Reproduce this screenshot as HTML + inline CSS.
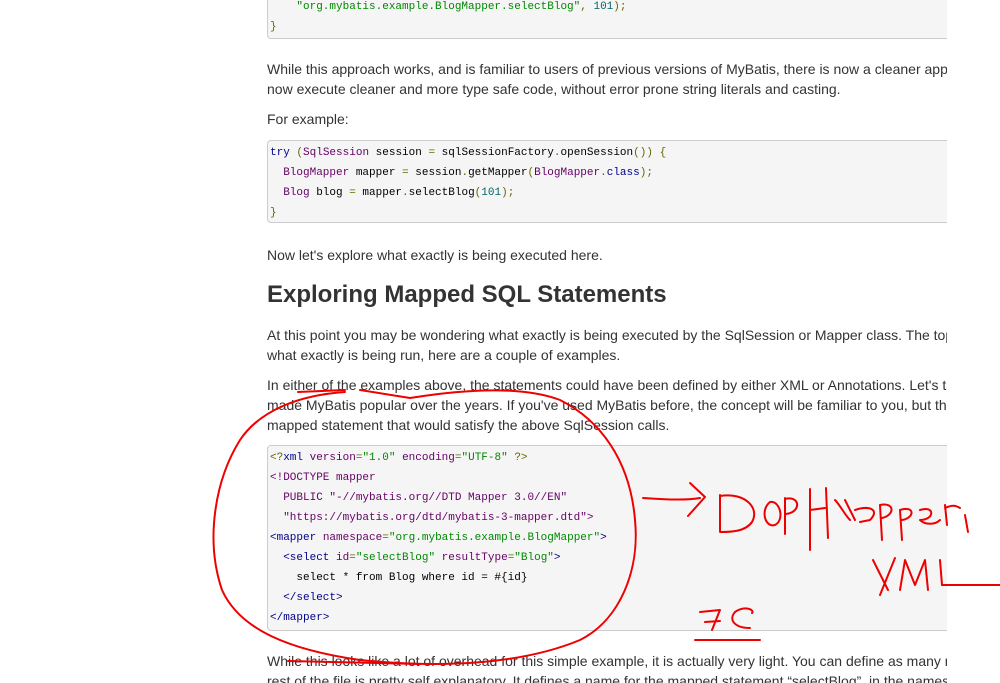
<!DOCTYPE html>
<html><head><meta charset="utf-8"><style>
body{margin:0;width:1000px;height:683px;background:#fff;overflow:hidden;position:relative;font-family:"Liberation Sans",Arial,sans-serif;color:#333}
#col{position:absolute;left:267px;top:0;width:680px;height:683px;overflow:hidden}
.p{position:absolute;left:0;white-space:nowrap;font-size:14px;line-height:20px}
.code{position:absolute;left:0;width:700px;background:#f5f5f5;border:1px solid #ccc;border-radius:4px;box-sizing:border-box;font-family:"Liberation Mono",monospace;font-size:11px;line-height:20px;padding:0 0 0 2px;white-space:pre;color:#000}
h2{position:absolute;left:0;margin:0;font-size:24px;line-height:30px;font-weight:bold;white-space:nowrap;color:#333}
.k{color:#008}.s{color:#080}.t{color:#606}.n{color:#066}.pu{color:#660}
</style></head><body>
<div id="col">
<div class="code" style="top:-6px;height:45px;padding-top:2px"><span class="s">    "org.mybatis.example.BlogMapper.selectBlog"</span><span class="pu">,</span> <span class="n">101</span><span class="pu">);</span>
<span class="pu">}</span></div>
<div class="p" style="top:59px">While this approach works, and is familiar to users of previous versions of MyBatis, there is now a cleaner approach. Using an interface</div>
<div class="p" style="top:79px">now execute cleaner and more type safe code, without error prone string literals and casting.</div>
<div class="p" style="top:109px">For example:</div>
<div class="code" style="top:140px;height:83px;padding-top:2px"><span class="k">try</span> <span class="pu">(</span><span class="t">SqlSession</span> session <span class="pu">=</span> sqlSessionFactory<span class="pu">.</span>openSession<span class="pu">())</span> <span class="pu">{</span>
  <span class="t">BlogMapper</span> mapper <span class="pu">=</span> session<span class="pu">.</span>getMapper<span class="pu">(</span><span class="t">BlogMapper</span><span class="pu">.</span><span class="k">class</span><span class="pu">);</span>
  <span class="t">Blog</span> blog <span class="pu">=</span> mapper<span class="pu">.</span>selectBlog<span class="pu">(</span><span class="n">101</span><span class="pu">);</span>
<span class="pu">}</span></div>
<div class="p" style="top:245px">Now let's explore what exactly is being executed here.</div>
<h2 style="top:280px">Exploring Mapped SQL Statements</h2>
<div class="p" style="top:325px">At this point you may be wondering what exactly is being executed by the SqlSession or Mapper class. The topic of Mapped SQL Statements</div>
<div class="p" style="top:345px">what exactly is being run, here are a couple of examples.</div>
<div class="p" style="top:375px">In either of the examples above, the statements could have been defined by either XML or Annotations. Let's take a look at XML first.</div>
<div class="p" style="top:395px">made MyBatis popular over the years. If you've used MyBatis before, the concept will be familiar to you, but there have been numerous</div>
<div class="p" style="top:415px">mapped statement that would satisfy the above SqlSession calls.</div>
<div class="code" style="top:445px;height:186px;padding-top:2px"><span class="pu">&lt;?</span><span class="k">xml</span> <span class="t">version</span><span class="pu">=</span><span class="s">"1.0"</span> <span class="t">encoding</span><span class="pu">=</span><span class="s">"UTF-8"</span> <span class="pu">?&gt;</span>
<span class="t">&lt;!DOCTYPE mapper</span>
<span class="t">  PUBLIC "-//mybatis.org//DTD Mapper 3.0//EN"</span>
<span class="t">  "https://mybatis.org/dtd/mybatis-3-mapper.dtd"&gt;</span>
<span class="k">&lt;mapper</span> <span class="t">namespace</span><span class="pu">=</span><span class="s">"org.mybatis.example.BlogMapper"</span><span class="k">&gt;</span>
  <span class="k">&lt;select</span> <span class="t">id</span><span class="pu">=</span><span class="s">"selectBlog"</span> <span class="t">resultType</span><span class="pu">=</span><span class="s">"Blog"</span><span class="k">&gt;</span>
    select * from Blog where id = #{id}
  <span class="k">&lt;/select&gt;</span>
<span class="k">&lt;/mapper&gt;</span></div>
<div class="p" style="top:651px">While this looks like a lot of overhead for this simple example, it is actually very light. You can define as many mapped statements as</div>
<div class="p" style="top:671px">rest of the file is pretty self explanatory. It defines a name for the mapped statement “selectBlog”, in the namespace</div>
</div>
<svg style="position:absolute;left:0;top:0" width="1000" height="683" fill="none" stroke="#e00" stroke-width="2" stroke-linecap="round" stroke-linejoin="round">
<path d="M345 392 C300 395 260 410 240 440 C215 480 205 540 222 590 C240 630 290 650 360 660 C440 668 520 665 580 640 C620 620 640 570 635 520 C630 460 600 420 560 400 C520 385 460 390 410 398 L360 390"/>
<path d="M298 392 L345 390"/>
<path d="M288 661 L420 664"/>
<path d="M643 498 C670 500 690 500 700 498 M690 483 L705 497 L688 516"/>
<path d="M720 495 L720 531 M720 496 C745 492 760 508 752 522 C745 532 730 532 720 532"/>
<path d="M770 502 C760 510 765 528 775 525 C785 520 780 500 770 502"/>
<path d="M785 498 L785 534 M785 499 C800 495 802 512 786 514"/>
<path d="M810 489 L810 550 M810 510 L825 508 M826 488 L828 538"/>
<path d="M835 500 C840 505 845 515 850 520 M845 500 L855 520"/>
<path d="M855 510 C870 505 880 510 870 520 L860 522"/>
<path d="M880 505 L882 540 M880 505 C895 502 895 515 882 518"/>
<path d="M900 510 L902 540 M900 510 C915 505 915 518 902 520"/>
<path d="M920 510 C935 505 935 520 920 520 C925 525 935 525 940 520"/>
<path d="M945 505 L947 525 M945 508 C952 505 955 505 960 508"/>
<path d="M965 515 L968 532"/>
<path d="M873 560 L888 590 M895 558 L880 595"/>
<path d="M900 590 L905 560 L915 585 L925 560 L928 590"/>
<path d="M940 560 L942 585 L1000 585"/>
<path d="M700 612 L720 610 L712 630 M705 622 L720 621 M735 612 C745 605 755 610 752 613 M735 612 C728 620 735 628 750 628 M695 640 L760 640"/>
</svg>
</body></html>
